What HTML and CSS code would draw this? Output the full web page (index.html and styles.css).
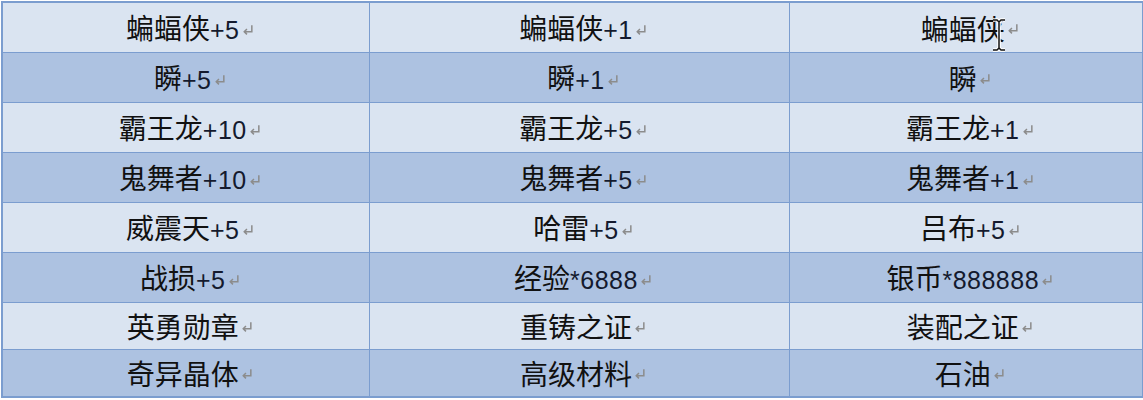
FILE: index.html
```html
<!DOCTYPE html>
<html lang="zh-CN">
<head>
<meta charset="utf-8">
<title>奖励表</title>
<link rel="stylesheet" href="styles.css">
</head>
<body>
<table class="grid">
  <colgroup><col class="c1"><col class="c2"><col class="c3"></colgroup>
  <tbody>
    <tr class="light">
      <td><span class="t">蝙蝠侠<span class="n">+5</span><svg class="pm" viewBox="0 0 12 12"><path d="M10 2v6H3M5.5 5.5L3 8l2.5 2.5"/></svg></span></td>
      <td><span class="t">蝙蝠侠<span class="n">+1</span><svg class="pm" viewBox="0 0 12 12"><path d="M10 2v6H3M5.5 5.5L3 8l2.5 2.5"/></svg></span></td>
      <td><span class="t">蝙蝠侠<svg class="pm" viewBox="0 0 12 12"><path d="M10 2v6H3M5.5 5.5L3 8l2.5 2.5"/></svg><svg class="ibeam" viewBox="0 0 16 34"><path class="ib-o" d="M2 2h4l2 2 2-2h4M8 4v26M2 32h4l2-2 2 2h4"/><path class="ib" d="M2 2h4l2 2 2-2h4M8 4v26M2 32h4l2-2 2 2h4"/></svg></span></td>
    </tr>
    <tr class="dark">
      <td><span class="t">瞬<span class="n">+5</span><svg class="pm" viewBox="0 0 12 12"><path d="M10 2v6H3M5.5 5.5L3 8l2.5 2.5"/></svg></span></td>
      <td><span class="t">瞬<span class="n">+1</span><svg class="pm" viewBox="0 0 12 12"><path d="M10 2v6H3M5.5 5.5L3 8l2.5 2.5"/></svg></span></td>
      <td><span class="t">瞬<svg class="pm" viewBox="0 0 12 12"><path d="M10 2v6H3M5.5 5.5L3 8l2.5 2.5"/></svg></span></td>
    </tr>
    <tr class="light">
      <td><span class="t">霸王龙<span class="n">+10</span><svg class="pm" viewBox="0 0 12 12"><path d="M10 2v6H3M5.5 5.5L3 8l2.5 2.5"/></svg></span></td>
      <td><span class="t">霸王龙<span class="n">+5</span><svg class="pm" viewBox="0 0 12 12"><path d="M10 2v6H3M5.5 5.5L3 8l2.5 2.5"/></svg></span></td>
      <td><span class="t">霸王龙<span class="n">+1</span><svg class="pm" viewBox="0 0 12 12"><path d="M10 2v6H3M5.5 5.5L3 8l2.5 2.5"/></svg></span></td>
    </tr>
    <tr class="dark">
      <td><span class="t">鬼舞者<span class="n">+10</span><svg class="pm" viewBox="0 0 12 12"><path d="M10 2v6H3M5.5 5.5L3 8l2.5 2.5"/></svg></span></td>
      <td><span class="t">鬼舞者<span class="n">+5</span><svg class="pm" viewBox="0 0 12 12"><path d="M10 2v6H3M5.5 5.5L3 8l2.5 2.5"/></svg></span></td>
      <td><span class="t">鬼舞者<span class="n">+1</span><svg class="pm" viewBox="0 0 12 12"><path d="M10 2v6H3M5.5 5.5L3 8l2.5 2.5"/></svg></span></td>
    </tr>
    <tr class="light">
      <td><span class="t">威震天<span class="n">+5</span><svg class="pm" viewBox="0 0 12 12"><path d="M10 2v6H3M5.5 5.5L3 8l2.5 2.5"/></svg></span></td>
      <td><span class="t">哈雷<span class="n">+5</span><svg class="pm" viewBox="0 0 12 12"><path d="M10 2v6H3M5.5 5.5L3 8l2.5 2.5"/></svg></span></td>
      <td><span class="t">吕布<span class="n">+5</span><svg class="pm" viewBox="0 0 12 12"><path d="M10 2v6H3M5.5 5.5L3 8l2.5 2.5"/></svg></span></td>
    </tr>
    <tr class="dark">
      <td><span class="t">战损<span class="n">+5</span><svg class="pm" viewBox="0 0 12 12"><path d="M10 2v6H3M5.5 5.5L3 8l2.5 2.5"/></svg></span></td>
      <td><span class="t">经验<span class="n">*6888</span><svg class="pm" viewBox="0 0 12 12"><path d="M10 2v6H3M5.5 5.5L3 8l2.5 2.5"/></svg></span></td>
      <td><span class="t">银币<span class="n">*888888</span><svg class="pm" viewBox="0 0 12 12"><path d="M10 2v6H3M5.5 5.5L3 8l2.5 2.5"/></svg></span></td>
    </tr>
    <tr class="light">
      <td><span class="t">英勇勋章<svg class="pm" viewBox="0 0 12 12"><path d="M10 2v6H3M5.5 5.5L3 8l2.5 2.5"/></svg></span></td>
      <td><span class="t">重铸之证<svg class="pm" viewBox="0 0 12 12"><path d="M10 2v6H3M5.5 5.5L3 8l2.5 2.5"/></svg></span></td>
      <td><span class="t">装配之证<svg class="pm" viewBox="0 0 12 12"><path d="M10 2v6H3M5.5 5.5L3 8l2.5 2.5"/></svg></span></td>
    </tr>
    <tr class="dark">
      <td><span class="t">奇异晶体<svg class="pm" viewBox="0 0 12 12"><path d="M10 2v6H3M5.5 5.5L3 8l2.5 2.5"/></svg></span></td>
      <td><span class="t">高级材料<svg class="pm" viewBox="0 0 12 12"><path d="M10 2v6H3M5.5 5.5L3 8l2.5 2.5"/></svg></span></td>
      <td><span class="t">石油<svg class="pm" viewBox="0 0 12 12"><path d="M10 2v6H3M5.5 5.5L3 8l2.5 2.5"/></svg></span></td>
    </tr>
  </tbody>
</table>
</body>
</html>
```

FILE: styles.css
```css
html, body {
  margin: 0;
  padding: 0;
  background: #ffffff;
}

body {
  padding: 1px 1px 0 1px;
}

.grid {
  width: 1141px;
  height: 397px;
  border-collapse: collapse;
  table-layout: fixed;
  border: 2px solid #7b9dcf;
  font-family: "Noto Sans CJK SC", "Noto Sans CJK TC", sans-serif;
  font-size: 28px;
  color: #111111;
}

.c1 { width: 367px; }
.c2 { width: 420px; }
.c3 { width: 354px; }

.grid td {
  padding: 0;
  border: 1px solid #7b9dcf;
  text-align: center;
  vertical-align: middle;
  line-height: 1;
}

.light td { background: #dae4f1; }
.dark td { background: #adc2e1; }

.t {
  position: relative;
  display: inline-flex;
  align-items: baseline;
  padding-left: 8px;
}

.n {
  font-family: "Liberation Sans", Arial, sans-serif;
  font-size: 25px;
  color: #141a2e;
  letter-spacing: 0.5px;
}

.pm {
  width: 13px;
  height: 13px;
  margin-left: 1px;
  fill: none;
  stroke: #8c8c8c;
  stroke-width: 1.4;
  align-self: flex-end;
  margin-bottom: 7px;
}

.ibeam {
  position: absolute;
  left: 78px;
  top: 4px;
  width: 16px;
  height: 34px;
  fill: none;
}

.ib-o {
  stroke: #ffffff;
  stroke-width: 3.5;
}

.ib {
  stroke: #111111;
  stroke-width: 1.5;
}
```
